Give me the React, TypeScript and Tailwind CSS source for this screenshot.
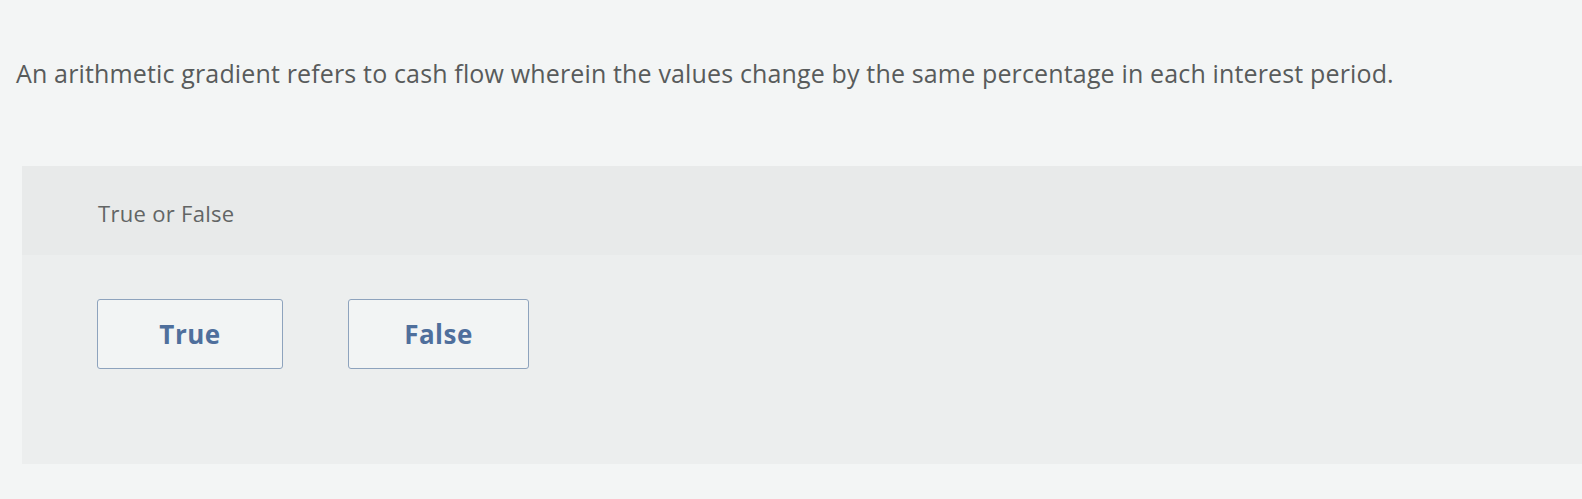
import React from 'react'

// True/False question card
const options = ['True', 'False']

function ChoiceButton({ label, width }: { label: string; width: string }) {
  return (
    <button
      className={`${width} h-[70px] flex items-center justify-center rounded-[3px] border border-[#8ea3bd] bg-[#f2f4f4] text-[26px] font-bold text-[#4f6f9c] tracking-[0.5px]`}
    >
      {label}
    </button>
  )
}

export default function App() {
  return (
    <div className="w-[1582px] h-[499px] overflow-hidden bg-[#f3f5f5] font-['Open_Sans','Liberation_Sans',sans-serif]">
      <p className="pl-[16px] pt-[53px] text-[25px] leading-[40px] text-[#585b5b] tracking-[0.15px]">
        An arithmetic gradient refers to cash flow wherein the values change by the same percentage in each interest period.
      </p>

      <div className="ml-[22px] mt-[73px] h-[298px] bg-[#eceeee]">
        <div className="h-[89px] bg-[#e8eaea] pl-[76px] pt-[31px] text-[22px] text-[#626565] tracking-[0.3px]">
          True or False
        </div>
        <div className="flex gap-[65px] pl-[75px] pt-[44px]">
          <ChoiceButton label={options[0]} width="w-[186px]" />
          <ChoiceButton label={options[1]} width="w-[181px]" />
        </div>
      </div>
    </div>
  )
}
